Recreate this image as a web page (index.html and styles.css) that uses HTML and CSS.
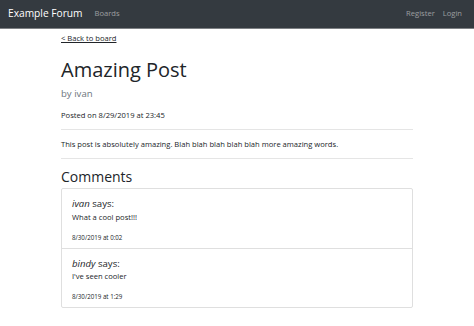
FILE: index.html
```html
<!DOCTYPE html>
<html lang="en">
<head>
    <meta charset="UTF-8">
    <meta name="viewport" content="width=device-width, initial-scale=1.0">
    <title>Amazing Post - Example Forum</title>
    <link rel="stylesheet" href="styles.css">
</head>
<body>
    <!-- top bar -->
    <nav class="navbar">
        <a class="brand" href="#">Example Forum</a>
        <a class="nav-link" href="#">Boards</a>
        <div class="nav-right">
            <a class="nav-link" href="#">Register</a>
            <a class="nav-link" href="#">Login</a>
        </div>
    </nav>

    <div class="container">
        <a class="back-link" href="#">&lt; Back to board</a>

        <h1 class="post-title">Amazing Post</h1>
        <div class="post-author">by ivan</div>
        <p class="post-date">Posted on 8/29/2019 at 23:45</p>

        <div class="post-body">
            <p>This post is absolutely amazing. Blah blah blah blah blah more amazing words.</p>
        </div>

        <h3 class="comments-title">Comments</h3>
        <ul class="comment-list">
            <li class="comment">
                <div class="comment-head"><em>ivan</em> says:</div>
                <p class="comment-text">What a cool post!!!</p>
                <small class="comment-date">8/30/2019 at 0:02</small>
            </li>
            <li class="comment">
                <div class="comment-head"><em>bindy</em> says:</div>
                <p class="comment-text">I've seen cooler</p>
                <small class="comment-date">8/30/2019 at 1:29</small>
            </li>
        </ul>
    </div>
</body>
</html>
```

FILE: styles.css
```css
body {
    margin: 0;
    font-family: "Open Sans", "Noto Sans", sans-serif;
    font-size: 7.6px;
    line-height: 1.5;
    color: #212529;
    background-color: #fff;
}

a {
    text-decoration: none;
}

/* top bar */
.navbar {
    display: flex;
    align-items: center;
    height: 28px;
    padding: 0 8px;
    background-color: #343a40;
    border-bottom: 1px solid #7d8084;
}

.brand {
    font-size: 10.2px;
    color: #fff;
    margin-right: 8px;
}

.nav-link {
    padding: 0 4px;
    color: rgba(255, 255, 255, 0.5);
}

.nav-right {
    display: flex;
    margin-left: auto;
}

/* content */
.container {
    width: 352px;
    margin: 0 auto;
}

.back-link {
    display: inline-block;
    margin-top: 4px;
    color: #212529;
    text-decoration: underline;
}

.post-title {
    margin: 14px 0 0;
    font-size: 20px;
    font-weight: 400;
    line-height: 1.2;
}

.post-author {
    margin-top: 5px;
    font-size: 9.6px;
    color: #6c757d;
}

.post-date {
    margin: 8px 0 8px;
}

.post-body {
    border-top: 1px solid rgba(0, 0, 0, 0.1);
    border-bottom: 1px solid rgba(0, 0, 0, 0.1);
    padding: 9px 0 7px;
}

.post-body p {
    margin: 0;
}

.comments-title {
    margin: 10px 0 3px;
    font-size: 14px;
    font-weight: 400;
    line-height: 1.2;
}

.comment-list {
    list-style: none;
    margin: 0;
    padding: 0;
    border: 1px solid rgba(0, 0, 0, 0.125);
    border-radius: 2px;
}

.comment {
    padding: 9px 10px 5px;
}

.comment + .comment {
    border-top: 1px solid rgba(0, 0, 0, 0.125);
}

.comment-head {
    font-size: 9.6px;
    line-height: 1.2;
    margin-bottom: 2px;
}

.comment-text {
    margin: 0 0 10px;
}

.comment-date {
    display: block;
    font-size: 6.2px;
}
```
